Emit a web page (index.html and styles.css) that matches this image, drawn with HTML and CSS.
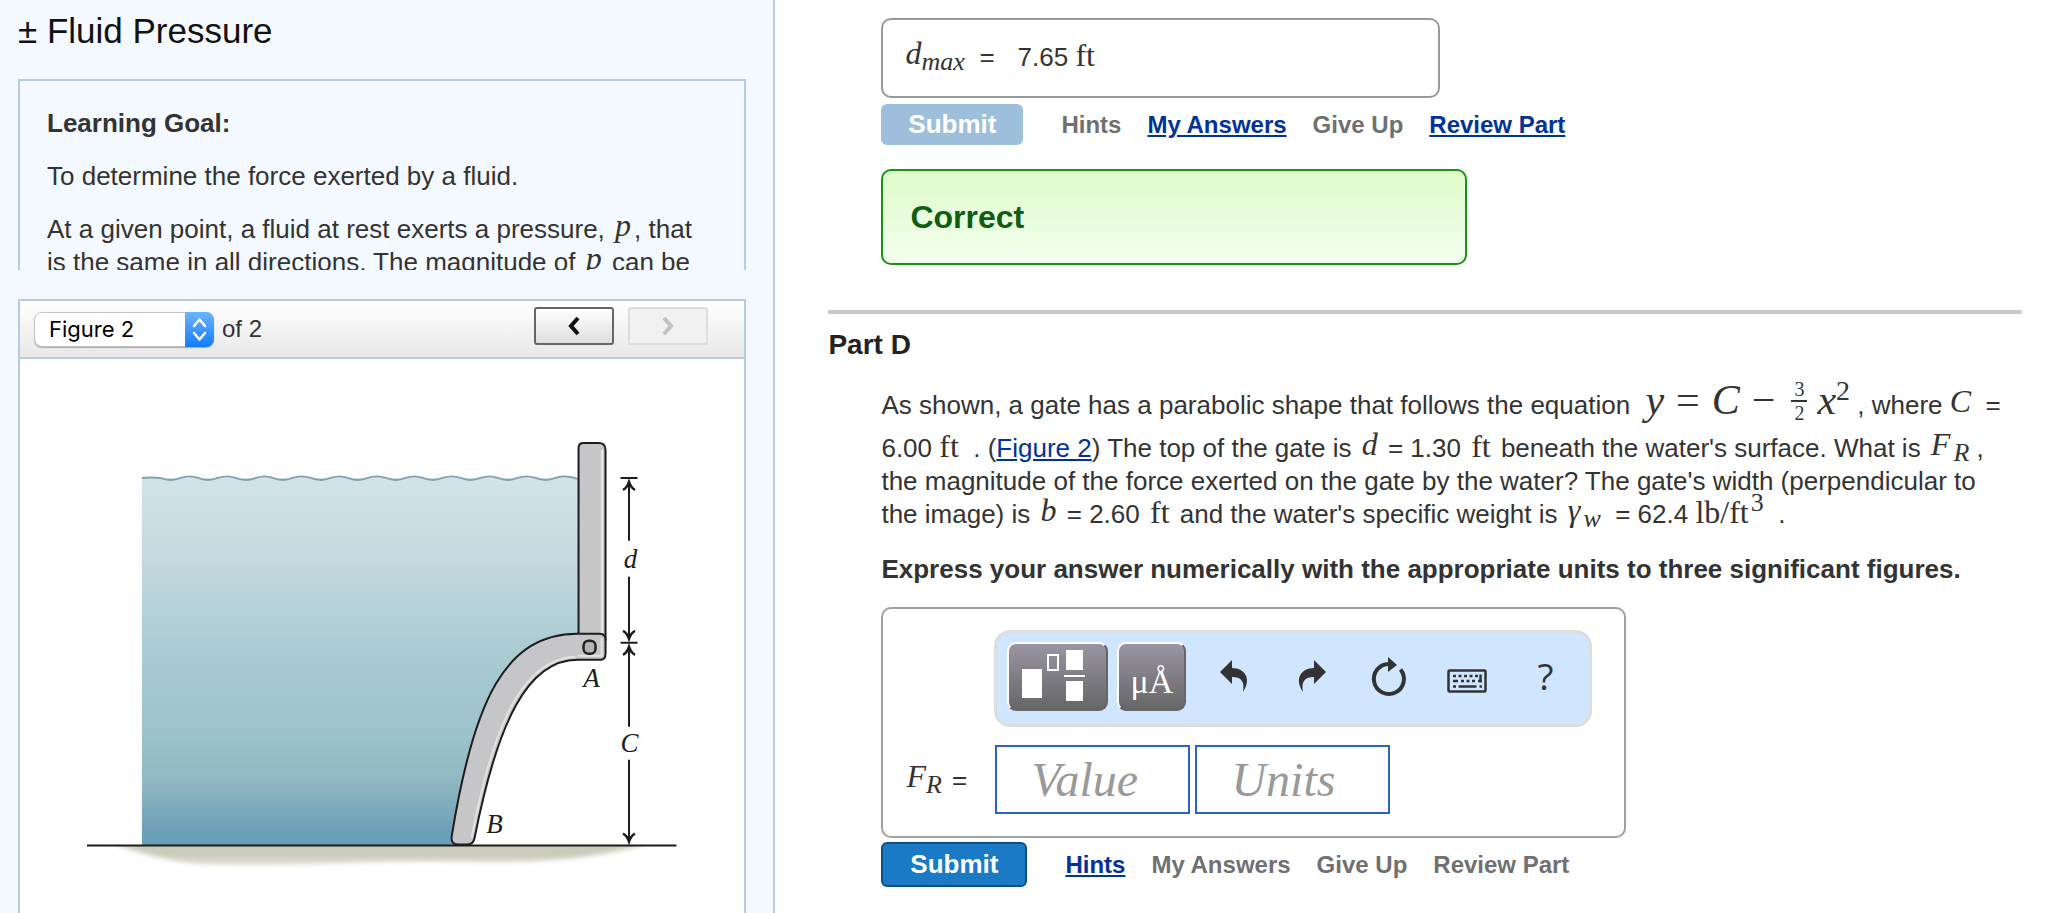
FILE: index.html
```html
<!DOCTYPE html>
<html lang="en">
<head>
<meta charset="utf-8">
<title>Fluid Pressure</title>
<link rel="stylesheet" href="styles.css">
</head>
<body>
<div class="layout">
  <aside class="sidebar">
    <h1 class="title">± Fluid Pressure</h1>
    <section class="goal">
      <p><strong>Learning Goal:</strong></p>
      <p>To determine the force exerted by a fluid.</p>
      <p>At a given point, a fluid at rest exerts a pressure, <i class="math gap">p</i>, that is the same in all directions. The magnitude of <i class="math gap">p</i> can be</p>
    </section>
    <section class="figure">
      <header class="figure-bar">
        <div class="picker">
          <select class="picker-select" aria-label="Figure"><option>Figure 1</option><option selected>Figure 2</option></select>
          <svg class="picker-arrows" viewBox="0 0 29 35" aria-hidden="true"><path d="M9 14l5.500-6.500L20 14M9 21l5.500 6.500L20 21" fill="none" stroke="#fff" stroke-width="2.500" stroke-linecap="round" stroke-linejoin="round"/></svg>
        </div>
        <span class="count">of 2</span>
        <div class="pager">
          <button class="page-btn" aria-label="Previous figure"><svg viewBox="0 0 14 20"><path d="M11 2L4 10l7 8" fill="none" stroke="#111" stroke-width="4"/></svg></button>
          <button class="page-btn page-btn-off" disabled aria-label="Next figure"><svg viewBox="0 0 14 20"><path d="M3 2l7 8-7 8" fill="none" stroke="#c2c2c2" stroke-width="4"/></svg></button>
        </div>
      </header>
      <svg class="drawing" viewBox="20 359 725 554" role="img" aria-label="Parabolic gate AB holding back water">
        <defs>
          <linearGradient id="water" x1="0" y1="0" x2="0" y2="1">
            <stop offset="0" stop-color="#d3e4e9"/><stop offset=".3" stop-color="#bdd4db"/><stop offset=".45" stop-color="#abccd3"/><stop offset=".7" stop-color="#9cc2ca"/><stop offset=".82" stop-color="#91b8c3"/><stop offset=".97" stop-color="#6a9fb7"/><stop offset="1" stop-color="#689eb6"/>
          </linearGradient>
          <linearGradient id="soil" x1="0" y1="0" x2="0" y2="1">
            <stop offset="0" stop-color="#c9c9b9"/><stop offset=".6" stop-color="#cbccbc"/><stop offset="1" stop-color="#e4e4dc"/>
          </linearGradient>
          <filter id="soft" x="-10%" y="-50%" width="120%" height="200%"><feGaussianBlur stdDeviation="6 2"/></filter>
          <clipPath id="under"><rect x="60" y="846" width="660" height="40"/></clipPath>
        </defs>
        <g clip-path="url(#under)"><path d="M104 840H662Q590 863 500 863Q400 861 340 864Q260 867 200 865Q155 861 104 840Z" fill="url(#soil)" filter="url(#soft)"/></g>
        <path d="M142 478H580V636C510 636 480 720 455 846H142Z" fill="url(#water)"/>
        <path d="M142 478q9-1 18 0q11 4 21 0q9-3 17 0q10 4 20 0q9-3 18 0q10 4 20 0q9-3 17 0q10 4 20 0q9-3 18 0q10 4 20 0q9-3 17 0q10 4 20 0q9-3 18 0q10 4 20 0q9-3 17 0q10 4 20 0q9-3 18 0q10 4 20 0q9-3 17 0q10 4 20 0q9-3 18 0q10 4 20 0q10-3 22 1" fill="none" stroke="#7fa3b0" stroke-width="2"/>
        <path d="M579 640V448q0-5 5-5h15q7 0 7 7V640Z" fill="#c6c6c8" stroke="#1c1c1c" stroke-width="2"/>
        <path d="M602.500 450V634" stroke="#e6e6e6" stroke-width="2.500"/>
        <path d="M578 634H600q6 0 6 6V654q0 6-5 6H578C528 660 498 722 475 838q-1 7-8 7H459q-8 0-7-8C474 700 506 634 578 634Z" fill="#c6c6c8" stroke="#1c1c1c" stroke-width="2"/>
        <path d="M576 657C524 659 494 722 472 838M602 638V656H578" fill="none" stroke="#e2e2de" stroke-width="2"/>
        <rect x="584" y="641" width="12" height="13" rx="5" fill="#b5b5b7" stroke="#222" stroke-width="2.500"/>
        <path d="M87 846H677" stroke="#1c1c1c" stroke-width="2"/>
        <g fill="none" stroke="#1c1c1c" stroke-width="2">
          <path d="M621 478H638M621 643H638M629.500 482V541M629.500 577V638M629.500 647V727M629.500 760V842"/>
          <path d="M623.500 490q4-2 6-8q2 6 6 8M623.500 631q4 2 6 8q2-6 6-8M623.500 655q4-2 6-8q2 6 6 8M623.500 834q4 2 6 8q2-6 6-8" stroke-width="2.500"/>
        </g>
        <g class="labels" text-anchor="middle"><text x="631" y="568">d</text><text x="592" y="687">A</text><text x="630" y="752">C</text><text x="495" y="833">B</text></g>
      </svg>
    </section>
  </aside>

  <main class="content">
    <div class="part part-done">
      <div class="answer"><span class="answer-name"><i class="math">d</i><i class="sub">max</i></span><span>=</span><span class="answer-value">7.65 <span class="unit">ft</span></span></div>
      <div class="actions">
        <button class="submit submit-off" disabled>Submit</button>
        <span class="action">Hints</span><a class="action" href="#">My Answers</a><span class="action">Give Up</span><a class="action" href="#">Review Part</a>
      </div>
      <div class="correct">Correct</div>
    </div>
    <hr class="rule">
    <h2 class="part-title">Part D</h2>
    <div class="part">
      <p class="question">As shown, a gate has a parabolic shape that follows the equation <span class="equation"><i>y</i><span class="op">=</span><i>C</i><span class="op">−</span><span class="frac"><span>3</span><span class="den">2</span></span><i>x</i><span class="power">2</span></span> , where <i class="math">C</i>&nbsp; = 6.00&nbsp;<span class="unit">ft</span>&nbsp; . (<a href="#">Figure 2</a>) The top of the gate is <i class="math gap">d</i> = 1.30&nbsp;<span class="unit gap">ft</span> beneath the water's surface. What is <i class="math gap">F</i><i class="sub">R</i>&nbsp;, the magnitude of the force exerted on the gate by the water? The gate's width (perpendicular to the image) is <i class="math gap">b</i> = 2.60&nbsp;<span class="unit gap">ft</span> and the water's specific weight is <i class="math gap">γ</i><i class="sub">w</i>&nbsp; = 62.4&nbsp;<span class="unit">lb/ft<span class="cube">3</span></span>&nbsp; .</p>
      <p class="prompt">Express your answer numerically with the appropriate units to three significant figures.</p>
      <form class="entry">
        <div class="toolbar">
          <button type="button" class="tool tool-wide" aria-label="Templates"><svg viewBox="0 0 97 65"><g fill="#fff"><rect x="13" y="25" width="20" height="29"/><rect x="57" y="6" width="17" height="20"/><rect x="57" y="37" width="17" height="20"/><rect x="55" y="31" width="21" height="2"/></g><rect x="39" y="11" width="10" height="15" fill="none" stroke="#fff" stroke-width="2"/></svg></button>
          <button type="button" class="tool">μÅ</button>
          <div class="icons">
            <button type="button" class="icon" aria-label="Undo"><svg viewBox="0 0 44 44"><path d="M8 18L20 6V14C33 14 40 25 31 38C33 27 29 23 20 23V30Z"/></svg></button>
            <button type="button" class="icon" aria-label="Redo"><svg viewBox="0 0 44 44"><path d="M36 18L24 6V14C11 14 4 25 13 38C11 27 15 23 24 23V30Z"/></svg></button>
            <button type="button" class="icon" aria-label="Reset"><svg viewBox="0 0 44 44"><path d="M21 10A15 15 0 1 0 32.500 15.500" fill="none" stroke="#333" stroke-width="4"/><path d="M20 3l9 8-9 7Z"/></svg></button>
            <button type="button" class="icon" aria-label="Keyboard"><svg viewBox="0 0 44 44"><rect x="2.500" y="16.500" width="37" height="21" rx="1" fill="none" stroke="#333" stroke-width="2.500"/><path d="M7 22h3m2.500 0h3m2.500 0h3m2.500 0h3m2.500 0h3M7 27h5m3 0h3m2.500 0h3m2.500 0h3m3 0h4m-1.500 1.500V20.500M7 32.500h3m2.500 0h18m3 0h2.500" fill="none" stroke="#333" stroke-width="2.500"/></svg></button>
            <button type="button" class="icon help" aria-label="Help">?</button>
          </div>
        </div>
        <div class="fields">
          <label class="field-name" for="value"><i class="math">F</i><i class="sub">R</i> <span>=</span></label>
          <input class="field" id="value" placeholder="Value"><input class="field" placeholder="Units" aria-label="Units">
        </div>
      </form>
      <div class="actions actions-live">
        <button class="submit">Submit</button>
        <a class="action" href="#">Hints</a><span class="action">My Answers</span><span class="action">Give Up</span><span class="action">Review Part</span>
      </div>
    </div>
  </main>
</div>
</body>
</html>
```
FILE: styles.css
```css
* { box-sizing: border-box; }
body { margin: 0; background: #fff; color: #333; font: 26px/32px "Liberation Sans", Arial, sans-serif; }
button, input, select { font-family: inherit; }
a { color: #039; }
.layout { display: grid; grid-template-columns: 379fr 621fr; height: 100vh; overflow: hidden; }

.sidebar { display: flex; flex-direction: column; padding: 0 27px 0 18px; min-width: 0; background: #f4f9ff; border-right: 2px solid #b8cbdd; }
.title { margin: 11px 0 28px; font-size: 35px; line-height: 40px; font-weight: 400; color: #111; }
.goal { flex: none; height: 191px; overflow: hidden; padding: 26px 38px 0 27px; border: 2px solid #b8cbdd; border-bottom: 0; }
.goal p { margin: 0 0 20px; line-height: 33px; }
.figure { flex: 1; margin-top: 29px; background: #fff; border: 2px solid #b8cbdd; border-bottom: 0; overflow: hidden; }
.figure-bar { display: flex; align-items: center; height: 58px; padding: 0 36px 0 14px; border-bottom: 2px solid #b8cbdd; background: linear-gradient(#fff, #e8e8e8); font-size: 24px; }
.picker { position: relative; width: 180px; height: 35px; }
.picker-select { appearance: none; width: 100%; height: 100%; padding: 0 14px; border: 1px solid #c4c4c4; border-radius: 8px; background: #fff; box-shadow: 0 1px 1px #aaa; color: #000; font: 22px "Inter", sans-serif; }
.picker-arrows { position: absolute; right: 0; top: 0; width: 29px; height: 35px; border-radius: 0 8px 8px 0; background: linear-gradient(#6cb3fa, #147cff); pointer-events: none; }
.count { margin-left: 8px; }
.pager { display: flex; gap: 14px; margin: 0 0 6px auto; }
.page-btn { display: grid; place-items: center; width: 80px; height: 38px; padding: 0; border: 2px solid #666; border-radius: 3px; background: linear-gradient(#fff, #dedede); }
.page-btn svg { width: 14px; height: 20px; }
.page-btn-off { border-color: #ddd; background: #f1f1f1; }
.drawing { display: block; width: 100%; }
.labels { font: italic 27px "Liberation Serif", serif; fill: #1c1c1c; }

.content { padding: 18px 24px 0 53px; min-width: 0; }
.part { padding-left: 53px; }
.math, .unit, .sub, .equation { font-family: "Liberation Serif", "Times New Roman", serif; line-height: 0; }
.math { font-size: 32px; vertical-align: 2px; }
.unit { font-size: 32px; }
.sub { font-size: 26px; vertical-align: -4px; }
.gap { margin: 0 3px; }
.answer { display: flex; align-items: center; width: 559px; height: 80px; padding: 0 22px 2px; border: 2px solid #999; border-radius: 10px; }
.answer-name { width: 74px; }
.answer-value { margin-left: 23px; }
.actions { display: flex; align-items: center; margin-top: 6px; font-size: 24px; font-weight: 700; }
.action { margin-right: 26px; color: #707070; }
a.action { color: #039; }
.submit { width: 142px; height: 41px; margin-right: 38px; padding: 0; border: 0; border-radius: 6px; background: #1b7ac6; color: #fff; font-size: 26px; font-weight: 700; }
.submit-off { background: #9dbfdc; }
.actions-live { margin-top: 4px; }
.actions-live .submit { width: 146px; height: 45px; border: 2px solid #0a4f86; }
.correct { width: 586px; margin-top: 24px; padding: 30px 27px; border: 2px solid #169416; border-radius: 10px; background: linear-gradient(#dffbca, #f2feee); color: #0f5d12; font-size: 32px; font-weight: 700; }
.rule { height: 4px; margin: 45px 0 0; border: 0; background: #c9c9c9; }
.part-title { margin: 15px 0 0; font-size: 28px; line-height: 32px; color: #222; }
.question { margin: 17px 0 0; padding-right: 12px; line-height: 33px; }
.equation { margin-left: 8px; font-size: 42px; }
.op { margin: 0 12px; }
.frac { display: inline-flex; flex-direction: column; width: 16px; margin: 0 10px 8px 4px; font-size: 20px; line-height: 22px; text-align: center; vertical-align: 18px; }
.den { border-top: 2px solid #333; }
.power { font-size: 28px; vertical-align: 14px; }
.cube { font-size: 26px; vertical-align: 12px; margin-left: 2px; }
.prompt { margin: 22px 0; font-weight: 700; }
.entry { width: 745px; padding: 21px 32px 22px 23px; border: 2px solid #a0a0a0; border-radius: 10px; }
.toolbar { display: flex; align-items: center; gap: 9px; height: 97px; margin-left: 88px; padding: 0 10px 4px; border: 3px solid #ddd; border-radius: 16px; background: #d0e5ff; }
.tool { width: 69px; height: 69px; padding: 10px 0 0; border: 2px solid; border-color: #fff #666 #666 #fff; border-radius: 9px; background: linear-gradient(#9995a3, #666); color: #fff; font: 34px "Liberation Serif", serif; }
.tool-wide { width: 101px; padding: 0; }
.tool-wide svg { display: block; width: 97px; height: 65px; }
.icons { display: flex; flex: 1; justify-content: space-between; padding: 0 12px 2px 17px; }
.icon { width: 44px; height: 44px; padding: 0; border: 0; background: none; color: #333; }
.icon svg { display: block; width: 44px; height: 44px; fill: #333; }
.help { font: 37px/44px "Open Sans", sans-serif; }
.fields { display: flex; align-items: center; gap: 5px; margin-top: 18px; }
.field-name { width: 84px; white-space: nowrap; }
.field-name span { margin-left: 3px; }
.field { width: 195px; height: 69px; padding: 0 34px; border: 2px solid #2a62cc; background: #fff; font: italic 48px "Liberation Serif", serif; color: #333; }
.field::placeholder { color: #999; opacity: 1; }
```
